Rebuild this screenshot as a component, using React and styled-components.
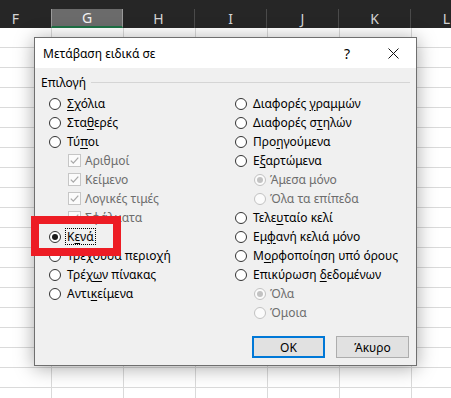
import React from 'react';
import styled, { createGlobalStyle, css } from 'styled-components';

const GlobalStyle = createGlobalStyle`
  html, body {
    margin: 0;
    padding: 0;
    background: #ffffff;
  }
  body {
    font-family: "Noto Sans", "Liberation Sans", sans-serif;
    overflow: hidden;
  }
`;

const Screen = styled.div`
  position: relative;
  width: 451px;
  height: 398px;
  overflow: hidden;
  display: flex;
  flex-direction: column;
`;

const HeaderBar = styled.div`
  display: flex;
  height: 28px;
  box-sizing: border-box;
  padding-top: 9px;
  margin-left: -20px;
  background: #262626;
`;

const ColHead = styled.div`
  flex: 0 0 72px;
  box-sizing: border-box;
  display: flex;
  align-items: center;
  justify-content: center;
  border-right: 1px solid #4a4a4a;
  color: #d4d4d4;
  font-size: 14px;
  ${p =>
    p.$selected &&
    css`
      background: #6b6b6b;
      border-left: 1px solid #9a9a9a;
      border-right: 1px solid #9a9a9a;
      border-bottom: 2px solid #1e7145;
      margin-left: -1px;
      color: #f2f2f2;
    `}
`;

const Sheet = styled.div`
  flex: 1;
  background-color: #ffffff;
  background-image: linear-gradient(to right, transparent 71px, #dadada 71px),
    linear-gradient(to bottom, transparent 19px, #dadada 19px);
  background-size: 72px 20px;
  background-position: -20px 0;
`;

const Dialog = styled.div`
  position: absolute;
  left: 34px;
  top: 37px;
  width: 383px;
  height: 329px;
  box-sizing: border-box;
  display: flex;
  flex-direction: column;
  border: 1px solid #6f6f6f;
  background: #f0f0f0;
  box-shadow: 0 2px 18px rgba(0, 0, 0, 0.35);
  color: #000;
  font-size: 12px;
`;

const TitleBar = styled.div`
  display: flex;
  align-items: center;
  height: 30px;
  padding-left: 8px;
  background: #ffffff;
`;

const Title = styled.div`
  flex: 1;
  font-size: 12px;
`;

const TitleButton = styled.div`
  width: 46px;
  height: 30px;
  display: flex;
  align-items: center;
  justify-content: center;
  font-size: 14px;
`;

const Body = styled.div`
  flex: 1;
  display: flex;
  flex-direction: column;
  padding: 6px 6px 7px 6px;
`;

const GroupHeader = styled.div`
  display: flex;
  align-items: center;
  gap: 5px;
  height: 16px;
`;

const GroupLine = styled.div`
  flex: 1;
  height: 1px;
  background: #d5d5d5;
`;

const Options = styled.div`
  display: grid;
  grid-template-columns: 186px 1fr;
  margin-top: 4px;
  padding-left: 8px;
`;

const Column = styled.div`
  display: flex;
  flex-direction: column;
`;

const Row = styled.div`
  display: flex;
  align-items: center;
  height: 19px;
  padding-left: ${p => (p.$sub ? 19 : 0)}px;
`;

const RadioCircle = styled.span`
  flex: 0 0 12px;
  width: 12px;
  height: 12px;
  box-sizing: border-box;
  display: flex;
  align-items: center;
  justify-content: center;
  margin-right: ${p => (p.$sub ? 3 : 5)}px;
  border-radius: 50%;
  border: 1px solid ${p => (p.$disabled ? '#c2c2c2' : '#333333')};
  background: ${p => (p.$disabled ? '#fbfbfb' : '#ffffff')};
  &::after {
    content: '';
    display: ${p => (p.$checked ? 'block' : 'none')};
    width: 6px;
    height: 6px;
    border-radius: 50%;
    background: ${p => (p.$disabled ? '#c2c2c2' : '#1a1a1a')};
  }
`;

const CheckBox = styled.span`
  flex: 0 0 13px;
  width: 13px;
  height: 13px;
  box-sizing: border-box;
  display: flex;
  align-items: center;
  justify-content: center;
  margin-right: 3px;
  border: 1px solid #c6c6c6;
  background: #fbfbfb;
`;

const Label = styled.span`
  color: ${p => (p.$disabled ? '#6d6d6d' : '#000')};
  line-height: 15px;
  padding: 0 1px;
  ${p =>
    p.$focused &&
    css`
      outline: 1px dotted #000;
    `}
`;

const Key = styled.span`
  text-decoration: underline;
  text-underline-offset: 2px;
`;

const Footer = styled.div`
  display: flex;
  justify-content: flex-end;
  gap: 11px;
  margin-top: auto;
  margin-right: 1px;
`;

const Button = styled.div`
  width: 73px;
  height: 22px;
  box-sizing: border-box;
  display: flex;
  align-items: center;
  justify-content: center;
  background: #e1e1e1;
  border: ${p => (p.$primary ? '2px solid #0078d7' : '1px solid #adadad')};
  font-size: 12px;
`;

const Highlight = styled.div`
  position: absolute;
  left: 31px;
  top: 216px;
  width: 90px;
  height: 40px;
  box-sizing: border-box;
  border: 8px solid #ed1c24;
  pointer-events: none;
`;

function withKey(text, k) {
  if (k === undefined) return text;
  return (
    <>
      {text.slice(0, k)}
      <Key>{text[k]}</Key>
      {text.slice(k + 1)}
    </>
  );
}

function Option({ item }) {
  const { text, k, type = 'radio', sub, checked, disabled, focused } = item;
  return (
    <Row $sub={sub}>
      {type === 'check' ? (
        <CheckBox>
          <svg width="11" height="11" viewBox="0 0 11 11">
            <path d="M1.8 5.6 L4.3 8.1 L9.3 2.6" fill="none" stroke="#a9a9a9" strokeWidth="1.3" />
          </svg>
        </CheckBox>
      ) : (
        <RadioCircle $checked={checked} $disabled={disabled} $sub={sub} />
      )}
      <Label $disabled={disabled} $focused={focused}>
        {withKey(text, k)}
      </Label>
    </Row>
  );
}

const leftItems = [
  { text: 'Σχόλια', k: 0 },
  { text: 'Σταθερές', k: 3 },
  { text: 'Τύποι', k: 2 },
  { text: 'Αριθμοί', type: 'check', sub: true, disabled: true },
  { text: 'Κείμενο', type: 'check', sub: true, disabled: true },
  { text: 'Λογικές τιμές', type: 'check', sub: true, disabled: true },
  { text: 'Σφάλματα', type: 'check', sub: true, disabled: true },
  { text: 'Κενά', k: 1, checked: true, focused: true },
  { text: 'Τρέχουσα περιοχή', k: 14 },
  { text: 'Τρέχων πίνακας', k: 4 },
  { text: 'Αντικείμενα', k: 4 },
];

const rightItems = [
  { text: 'Διαφορές γραμμών', k: 9 },
  { text: 'Διαφορές στηλών', k: 10 },
  { text: 'Προηγούμενα', k: 3 },
  { text: 'Εξαρτώμενα', k: 1 },
  { text: 'Άμεσα μόνο', sub: true, disabled: true, checked: true },
  { text: 'Όλα τα επίπεδα', sub: true, disabled: true },
  { text: 'Τελευταίο κελί', k: 4 },
  { text: 'Εμφανή κελιά μόνο', k: 2 },
  { text: 'Μορφοποίηση υπό όρους', k: 1 },
  { text: 'Επικύρωση δεδομένων', k: 10 },
  { text: 'Όλα', sub: true, disabled: true, checked: true },
  { text: 'Όμοια', sub: true, disabled: true },
];

const columns = ['F', 'G', 'H', 'I', 'J', 'K', 'L'];

export default function App() {
  return (
    <>
      <GlobalStyle />
      <Screen>
        <HeaderBar>
          {columns.map(c => (
            <ColHead key={c} $selected={c === 'G'}>
              {c}
            </ColHead>
          ))}
        </HeaderBar>
        <Sheet />

        <Dialog>
          <TitleBar>
            <Title>Μετάβαση ειδικά σε</Title>
            <TitleButton>?</TitleButton>
            <TitleButton>
              <svg width="11" height="11" viewBox="0 0 11 11">
                <path d="M0.5 0.5 L10.5 10.5 M10.5 0.5 L0.5 10.5" stroke="#111" strokeWidth="1" />
              </svg>
            </TitleButton>
          </TitleBar>
          <Body>
            <GroupHeader>
              <span>Επιλογή</span>
              <GroupLine />
            </GroupHeader>
            <Options>
              <Column>
                {leftItems.map(item => (
                  <Option key={item.text} item={item} />
                ))}
              </Column>
              <Column>
                {rightItems.map(item => (
                  <Option key={item.text} item={item} />
                ))}
              </Column>
            </Options>
            <Footer>
              <Button $primary>OK</Button>
              <Button>Άκυρο</Button>
            </Footer>
          </Body>
        </Dialog>

        <Highlight />
      </Screen>
    </>
  );
}
